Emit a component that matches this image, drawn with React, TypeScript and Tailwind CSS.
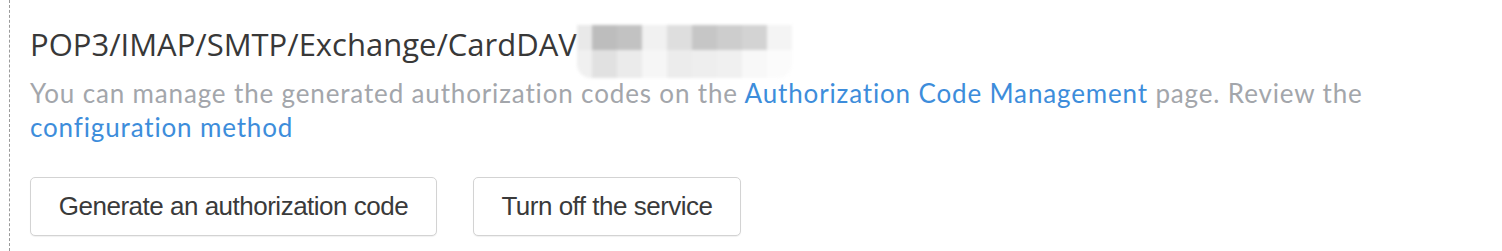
import React from "react";

const mosaicTop = ["#e9e9e9", "#bdbdbd", "#c2c2c2", "#f1f1f1", "#dedede", "#c6c6c6", "#cdcdcd", "#d3d3d3", "#f4f4f4"];
const mosaicBottom = ["#f0f0f0", "#e1e1e1", "#ebebeb", "#f6f6f6", "#ececec", "#eeeeee", "#f0f0f0", "#f8f8f8", "#fbfbfb"];

function Mosaic() {
  return (
    <span className="inline-grid grid-cols-[15px_repeat(8,25px)] grid-rows-[25px_28px] overflow-hidden rounded-b-[14px] blur-[1.5px] mt-[3px]">
      {mosaicTop.map((c, i) => (
        <span key={"t" + i} style={{ backgroundColor: c }} />
      ))}
      {mosaicBottom.map((c, i) => (
        <span key={"b" + i} style={{ backgroundColor: c }} />
      ))}
    </span>
  );
}

export default function App() {
  return (
    <div className="w-[1502px] h-[251px] bg-white flex overflow-hidden">
      <div className="w-[9px] shrink-0" />
      <div className="flex-1 border-l border-dashed border-[#9a9a9a] pl-[20px] pt-[22px]">
        <div className="flex items-start h-[48px]">
          <h2 className="text-[31px] leading-[48px] -mt-[2px] text-[#383838] font-['Open_Sans',sans-serif] font-normal">
            POP3/IMAP/SMTP/Exchange/CardDAV
          </h2>
          <Mosaic />
        </div>
        <p className="mt-[6px] text-[26px] leading-[34px] tracking-[0.85px] text-[#a3a6ab] font-['Lato',sans-serif]">
          You can manage the generated authorization codes on the{" "}
          <a className="text-[#3d8ddb]">Authorization Code Management</a> page. Review the
          <br />
          <a className="text-[#3d8ddb]">configuration method</a>
        </p>
        <div className="flex gap-[36px] mt-[33px]">
          <button className="w-[407px] h-[59px] rounded-[5px] border border-[#d3d3d3] bg-white text-[26px] tracking-[-0.5px] text-[#3a3a3a] font-['Liberation_Sans',Arial,sans-serif] shadow-[0_1px_1px_rgba(0,0,0,0.06)]">
            Generate an authorization code
          </button>
          <button className="w-[268px] h-[59px] rounded-[5px] border border-[#d3d3d3] bg-white text-[26px] tracking-[-0.5px] text-[#3a3a3a] font-['Liberation_Sans',Arial,sans-serif] shadow-[0_1px_1px_rgba(0,0,0,0.06)]">
            Turn off the service
          </button>
        </div>
      </div>
    </div>
  );
}
